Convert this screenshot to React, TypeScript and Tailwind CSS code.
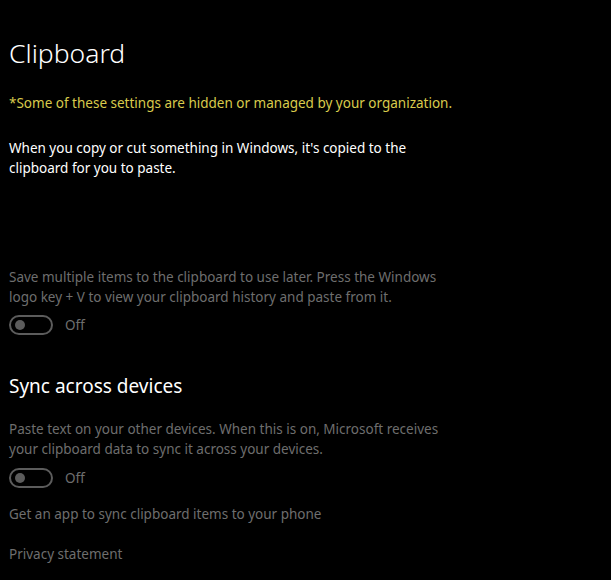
import React from "react";

function Toggle() {
  return (
    <div className="flex items-center h-[20px]">
      <div className="w-[44px] h-[20px] rounded-full border-2 border-[#5c5c5c] flex items-center pl-[4px] box-border">
        <div className="w-[10px] h-[10px] rounded-full bg-[#5c5c5c]" />
      </div>
      <span className="ml-[12px] text-[13.5px] leading-[20px] text-[#6e6e6e]">Off</span>
    </div>
  );
}

export default function App() {
  return (
    <div
      className="w-[611px] h-[580px] bg-black overflow-hidden pl-[9px] pt-[33px] box-border"
      style={{ fontFamily: '"Noto Sans", "Open Sans", sans-serif' }}
    >
      <h1 className="text-[26.5px] leading-[40px] font-light text-white">Clipboard</h1>
      <p className="mt-[20px] text-[13.5px] leading-[20px] text-[#d9cb4c] whitespace-nowrap">
        *Some of these settings are hidden or managed by your organization.
      </p>
      <p className="mt-[25px] text-[13.5px] leading-[20px] text-white whitespace-nowrap">
        When you copy or cut something in Windows, it's copied to the
        <br />
        clipboard for you to paste.
      </p>
      <p className="mt-[89px] text-[13.5px] leading-[20px] text-[#6e6e6e] whitespace-nowrap">
        Save multiple items to the clipboard to use later. Press the Windows
        <br />
        logo key + V to view your clipboard history and paste from it.
      </p>
      <div className="mt-[8px]">
        <Toggle />
      </div>
      <h2 className="mt-[37px] text-[19px] leading-[28px] text-white">Sync across devices</h2>
      <p className="mt-[19px] text-[13.5px] leading-[20px] text-[#6e6e6e] whitespace-nowrap">
        Paste text on your other devices. When this is on, Microsoft receives
        <br />
        your clipboard data to sync it across your devices.
      </p>
      <div className="mt-[9px]">
        <Toggle />
      </div>
      <p className="mt-[16px] text-[13.5px] leading-[20px] text-[#6e6e6e]">
        Get an app to sync clipboard items to your phone
      </p>
      <p className="mt-[20px] text-[13.5px] leading-[20px] text-[#6e6e6e]">Privacy statement</p>
    </div>
  );
}
